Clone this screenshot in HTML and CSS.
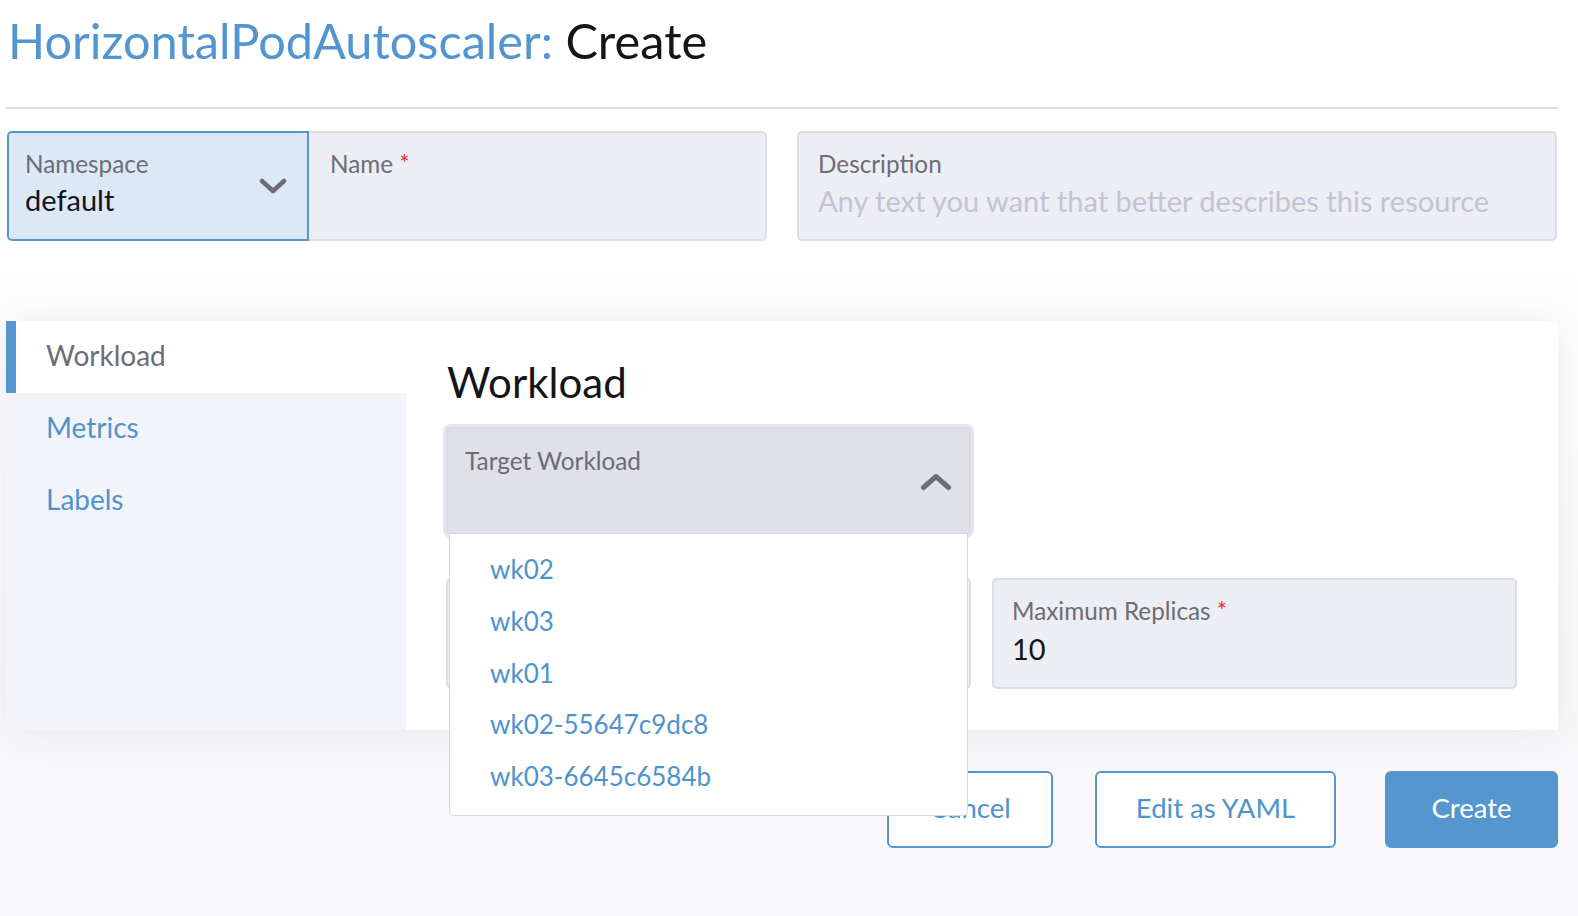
FILE: index.html
```html
<!DOCTYPE html>
<html lang="en">
<head>
<meta charset="utf-8">
<title>HorizontalPodAutoscaler: Create</title>
<link rel="stylesheet" href="styles.css">
</head>
<body>
<div class="page">
  <header class="page-header">
    <h1 class="title"><span class="title-type">HorizontalPodAutoscaler:</span> <span class="title-mode">Create</span></h1>
  </header>

  <section class="meta-row">
    <div class="meta-col ns-name">
      <div class="field field-ns">
        <div class="field-text">
          <div class="field-label">Namespace</div>
          <div class="field-value">default</div>
        </div>
        <svg class="chev" viewBox="0 0 28 16" width="28" height="16"><path d="M3 3 L14 13 L25 3" fill="none" stroke="#6c6c76" stroke-width="4.5" stroke-linecap="round" stroke-linejoin="round"/></svg>
      </div>
      <div class="field field-name">
        <div class="field-text">
          <div class="field-label">Name <span class="req">*</span></div>
          <div class="field-value"></div>
        </div>
      </div>
    </div>
    <div class="meta-col">
      <div class="field field-desc">
        <div class="field-text">
          <div class="field-label">Description</div>
          <div class="field-value placeholder">Any text you want that better describes this resource</div>
        </div>
      </div>
    </div>
  </section>

  <section class="panel">
    <nav class="tabs">
      <div class="tab active">Workload</div>
      <div class="tab">Metrics</div>
      <div class="tab">Labels</div>
    </nav>
    <div class="tab-body">
      <h2 class="section-title">Workload</h2>
      <div class="select-wrap">
        <div class="field field-target">
          <div class="field-text">
            <div class="field-label">Target Workload</div>
            <div class="field-value"></div>
          </div>
          <svg class="chev chev-up" viewBox="0 0 32 19" width="32" height="19"><path d="M3.5 15.5 L16 4.5 L28.5 15.5" fill="none" stroke="#6c6c76" stroke-width="5" stroke-linecap="round" stroke-linejoin="round"/></svg>
        </div>
        <ul class="menu">
          <li>wk02</li>
          <li>wk03</li>
          <li>wk01</li>
          <li>wk02-55647c9dc8</li>
          <li>wk03-6645c6584b</li>
        </ul>
      </div>
      <div class="replicas">
        <div class="field field-rep">
          <div class="field-text">
            <div class="field-label">Minimum Replicas <span class="req">*</span></div>
            <div class="field-value">1</div>
          </div>
        </div>
        <div class="field field-rep">
          <div class="field-text">
            <div class="field-label">Maximum Replicas <span class="req">*</span></div>
            <div class="field-value">10</div>
          </div>
        </div>
      </div>
    </div>
  </section>

  <footer class="footer">
    <button class="btn btn-outline btn-cancel">Cancel</button>
    <button class="btn btn-outline btn-yaml">Edit as YAML</button>
    <button class="btn btn-primary btn-create">Create</button>
  </footer>
</div>
</body>
</html>
```

FILE: styles.css
```css
* { box-sizing: border-box; }

html, body {
  margin: 0;
  padding: 0;
  height: 100%;
}

body {
  background: #ffffff;
  font-family: "Lato", "Open Sans", sans-serif;
  color: #141419;
  overflow: hidden;
}

.page {
  min-height: 916px;
  display: flex;
  flex-direction: column;
  background: linear-gradient(#ffffff 0, #ffffff 250px, #f8f8fa 760px);
}

.page-header {
  margin: 0 20px 0 6px;
  padding-top: 12px;
  padding-bottom: 39px;
  border-bottom: 2px solid #dcdee7;
}

.title {
  margin: 0;
  padding-left: 2px;
  font-size: 48.7px;
  line-height: 56px;
  font-weight: 400;
}

.title-type { color: #5395d0; }
.title-mode { color: #141419; }

.meta-row {
  margin: 22px 21px 0 7px;
  display: grid;
  grid-template-columns: 1fr 1fr;
  column-gap: 30px;
}

.meta-col {
  display: flex;
}

.field {
  height: 110px;
  background: #edeef3;
  border: 2px solid #dcdee7;
  border-radius: 5px;
  padding: 17px 18px 0 18px;
  display: flex;
  align-items: flex-start;
  justify-content: space-between;
}

.ns-name .field-ns {
  width: 302px;
  flex: none;
  background: #dce8f5;
  border: 2px solid #5596d0;
  border-radius: 5px 0 0 5px;
  padding-left: 16px;
  padding-right: 20px;
}

.ns-name .field-name {
  flex: 1;
  border-left: none;
  border-radius: 0 5px 5px 0;
  padding-left: 21px;
}

.field-desc { flex: 1; padding-left: 19px; }

.field-text {
  display: flex;
  flex-direction: column;
}

.field-label {
  font-size: 24.3px;
  line-height: 28px;
  color: #6c6c76;
}

.req { color: #e5322b; }

.field-value {
  margin-top: 4px;
  font-size: 29px;
  line-height: 36px;
  min-height: 36px;
  color: #141419;
}

.placeholder { color: #c2c3d3; margin-top: 5px; }

.chev {
  align-self: center;
  margin-top: -17px;
  flex: none;
}

/* panel */
.panel {
  margin: 80px 20px 0 6px;
  display: flex;
  height: 409px;
  background: #ffffff;
  border-radius: 0 0 0 10px;
  box-shadow: 0 0 40px rgba(30, 30, 60, 0.08);
}

.tabs {
  width: 400px;
  flex: none;
  background: #f3f4f9;
  border-radius: 0 0 0 10px;
}

.tab {
  height: 72px;
  display: flex;
  align-items: center;
  padding-left: 40px;
  padding-bottom: 4px;
  font-size: 28px;
  color: #4f93ce;
}

.tab.active {
  background: #ffffff;
  color: #6c6c76;
  border-left: 10px solid #5596d0;
  padding-left: 30px;
}

.tab-body {
  flex: 1;
  padding: 0 41px 0 40px;
}

.section-title {
  margin: 37px 0 0 1px;
  padding-bottom: 1px;
  font-size: 42px;
  line-height: 48px;
  font-weight: 400;
  color: #141419;
}

.select-wrap {
  position: relative;
  margin-top: 20px;
  width: calc((100% - 21px) / 2);
}

.field-target {
  height: 108px;
  background: #dfe0e8;
  border-color: #dadbe4;
  box-shadow: 0 0 0 3px #e5e6ed;
  padding: 18px 17px 0 17px;
}

.chev-up {
  margin-top: -18px;
}

.menu {
  position: absolute;
  top: 106px;
  left: 3px;
  right: 3px;
  margin: 0;
  padding: 10px 0 12px 0;
  list-style: none;
  background: #ffffff;
  border: 1px solid #d4d6e0;
  border-radius: 0 0 5px 5px;
  z-index: 5;
}

.menu li {
  padding-left: 40px;
  padding-bottom: 1px;
  font-size: 26px;
  line-height: 50.75px;
  color: #4f93ce;
}

.replicas {
  margin-top: 43px;
  display: grid;
  grid-template-columns: 1fr 1fr;
  column-gap: 21px;
}

.field-rep {
  height: 111px;
  padding-left: 18px;
}

.field-rep .field-value { margin-top: 6px; }

/* footer */
.footer {
  margin: 41px 20px 0 0;
  display: flex;
  justify-content: flex-end;
}

.btn {
  height: 77px;
  font-family: inherit;
  font-size: 27.5px;
  border-radius: 6px;
  border: 2px solid #5596d0;
  padding: 0 0 4px 0;
}

.btn-outline {
  background: #ffffff;
  color: #4f93ce;
}

.btn-cancel { width: 166px; margin-right: 42px; }
.btn-yaml { width: 241px; margin-right: 49px; }

.btn-primary {
  width: 173px;
  background: #5596d0;
  color: #ffffff;
}
```
